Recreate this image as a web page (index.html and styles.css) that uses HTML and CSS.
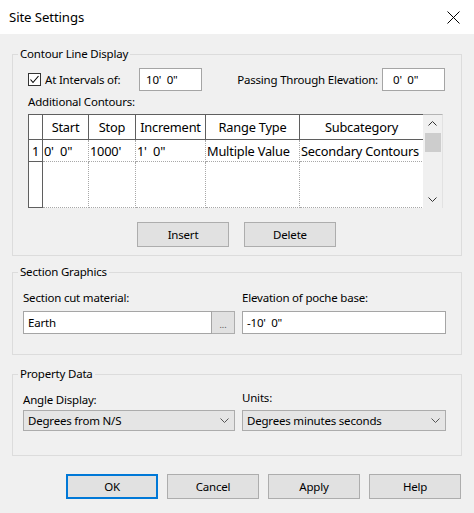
FILE: index.html
```html
<!DOCTYPE html>
<html lang="en">
<head>
<meta charset="utf-8">
<title>Site Settings</title>
<link rel="stylesheet" href="styles.css">
</head>
<body>
<div class="dialog">
  <div class="titlebar">
    <span class="title">Site Settings</span>
    <svg class="close" width="13" height="13" viewBox="0 0 13 13"><path d="M0.5 0.5L12.5 12.5M12.5 0.5L0.5 12.5" stroke="#000" stroke-width="1" fill="none"/></svg>
  </div>
  <div class="body">
    <fieldset class="group">
      <legend>Contour Line Display</legend>
      <div class="group-body contour">
        <div class="row-intervals">
          <label class="check">
            <span class="checkbox"><svg width="11" height="11" viewBox="0 0 11 11"><path d="M1.5 5.5L4 8.5L9.5 2" stroke="#000" stroke-width="1.1" fill="none"/></svg></span>
            <span>At Intervals of:</span>
          </label>
          <div class="textbox short pad6">10'  0"</div>
          <span class="spacer"></span>
          <span class="label">Passing Through Elevation:</span>
          <div class="textbox short pad10">0'  0"</div>
        </div>
        <div class="label add-label">Additional Contours:</div>
        <div class="grid-wrap">
          <div class="grid">
            <div class="hcell rowhead"></div>
            <div class="hcell">Start</div>
            <div class="hcell">Stop</div>
            <div class="hcell">Increment</div>
            <div class="hcell">Range Type</div>
            <div class="hcell">Subcategory</div>

            <div class="rcell">1</div>
            <div class="dcell">0'  0"</div>
            <div class="dcell">1000'</div>
            <div class="dcell">1'  0"</div>
            <div class="dcell">Multiple Value</div>
            <div class="dcell">Secondary Contours</div>

            <div class="rcell newrow"></div>
            <div class="dcell"></div>
            <div class="dcell"></div>
            <div class="dcell"></div>
            <div class="dcell"></div>
            <div class="dcell"></div>
          </div>
          <div class="scrollbar">
            <div class="sb-arrow"><svg width="9" height="5" viewBox="0 0 9 5"><path d="M0.5 4.5L4.5 0.5L8.5 4.5" stroke="#333" stroke-width="1" fill="none"/></svg></div>
            <div class="sb-thumb"></div>
            <div class="sb-track"></div>
            <div class="sb-arrow"><svg width="9" height="5" viewBox="0 0 9 5"><path d="M0.5 0.5L4.5 4.5L8.5 0.5" stroke="#333" stroke-width="1" fill="none"/></svg></div>
          </div>
        </div>
        <div class="btn-row center">
          <button class="btn">Insert</button>
          <button class="btn">Delete</button>
        </div>
      </div>
    </fieldset>

    <fieldset class="group section">
      <legend>Section Graphics</legend>
      <div class="group-body two-col g2">
        <div class="col">
          <div class="label">Section cut material:</div>
          <div class="picker">
            <div class="textbox grow pad4">Earth</div>
            <button class="dots">...</button>
          </div>
        </div>
        <div class="col">
          <div class="label">Elevation of poche base:</div>
          <div class="picker">
            <div class="textbox grow pad4">-10'  0"</div>
          </div>
        </div>
      </div>
    </fieldset>

    <fieldset class="group property">
      <legend>Property Data</legend>
      <div class="group-body two-col g3">
        <div class="col">
          <div class="label">Angle Display:</div>
          <div class="combo"><span>Degrees from N/S</span><svg width="9" height="5" viewBox="0 0 9 5"><path d="M0.5 0.5L4.5 4.5L8.5 0.5" stroke="#555" stroke-width="1" fill="none"/></svg></div>
        </div>
        <div class="col">
          <div class="label units">Units:</div>
          <div class="combo"><span>Degrees minutes seconds</span><svg width="9" height="5" viewBox="0 0 9 5"><path d="M0.5 0.5L4.5 4.5L8.5 0.5" stroke="#555" stroke-width="1" fill="none"/></svg></div>
        </div>
      </div>
    </fieldset>

    <div class="btn-row end">
      <button class="btn default">OK</button>
      <button class="btn">Cancel</button>
      <button class="btn">Apply</button>
      <button class="btn">Help</button>
    </div>
  </div>
</div>
</body>
</html>
```

FILE: styles.css
```css
* { box-sizing: border-box; }

body {
  margin: 0;
  background: #f0f0f0;
  font-family: "Noto Sans", "Open Sans", sans-serif;
  font-size: 11.5px;
  letter-spacing: -0.2px;
  color: #000;
}

.dialog {
  width: 474px;
  height: 513px;
  background: #f0f0f0;
}

.titlebar {
  height: 34px;
  background: #fff;
  display: flex;
  align-items: center;
  justify-content: space-between;
  padding: 0 14px 0 9px;
}

.title {
  font-size: 13.2px;
  letter-spacing: -0.1px;
  line-height: 20px;
}

.close { display: block; }

.body {
  padding: 12px 12px 0 12px;
}

.group {
  margin: 0;
  padding: 0;
  border: 1px solid #dcdcdc;
  min-width: 0;
}

.group legend {
  margin-left: 5px;
  padding: 0 2px;
  line-height: 16px;
  height: 16px;
}

.group.section { margin-top: 8px; }
.group.property { margin-top: 11px; }

.group-body.contour {
  padding: 6px 16px 8px 15px;
}

.label {
  line-height: 16px;
  white-space: nowrap;
}

.row-intervals {
  display: flex;
  align-items: center;
  height: 23px;
}

.check {
  display: flex;
  align-items: center;
  width: 111px;
}

.checkbox {
  width: 13px;
  height: 13px;
  border: 1px solid #333;
  background: #fff;
  margin-right: 4px;
  display: flex;
  align-items: center;
  justify-content: center;
}

.checkbox svg { display: block; }

.spacer { flex: 1; }

.textbox {
  height: 23px;
  border: 1px solid #a5a5a5;
  background: #fff;
  display: flex;
  align-items: center;
  white-space: pre;
}

.textbox.short { width: 63px; }
.row-intervals .label { margin-right: 4px; }

.pad4 { padding-left: 4px; }
.pad6 { padding-left: 6px; }
.pad10 { padding-left: 10px; }

.add-label { margin-top: 3px; }

.grid-wrap {
  display: flex;
  width: 415px;
  height: 94px;
  margin-top: 4px;
}

.grid {
  width: 395px;
  display: grid;
  grid-template-columns: 14px 46px 47px 70px 94px 124px;
  grid-template-rows: 25px 22px 1fr;
  background: #fff;
  border-top: 1px solid #5f5f5f;
  border-left: 1px solid #5f5f5f;
}

.hcell {
  border-right: 1px solid #5f5f5f;
  border-bottom: 1px solid #5f5f5f;
  display: flex;
  align-items: center;
  justify-content: center;
  white-space: nowrap;
  overflow: hidden;
  font-size: 12.8px;
}

.hcell.rowhead { background: #fff; }

.rcell {
  border-right: 1px solid #5f5f5f;
  border-bottom: 1px solid #5f5f5f;
  display: flex;
  align-items: center;
  justify-content: center;
  font-size: 12.8px;
}

.rcell.newrow {
  border-left: 1px solid #5f5f5f;
  margin-left: -1px;
}

.dcell {
  border-right: 1px dotted #a8a8a8;
  border-bottom: 1px dotted #a8a8a8;
  display: flex;
  align-items: center;
  padding-left: 1px;
  white-space: pre;
  overflow: hidden;
  font-size: 12.8px;
}

.scrollbar {
  width: 20px;
  display: flex;
  flex-direction: column;
  border-top: 1px solid #b4b4b4;
  border-right: 1px solid #e2e2e2;
  background: #f0f0f0;
}

.sb-arrow {
  height: 17px;
  display: flex;
  align-items: center;
  justify-content: center;
}

.sb-thumb {
  height: 19px;
  margin: 1px 1px 0 2px;
  background: #cdcdcd;
}

.sb-track { flex: 1; }

.btn-row {
  display: flex;
}

.btn-row.center {
  justify-content: center;
  gap: 15px;
  margin-top: 14px;
}

.btn-row.end {
  justify-content: flex-end;
  gap: 9px;
  margin-top: 18px;
  padding-right: 1px;
}

.btn {
  width: 92px;
  height: 25px;
  background: #e1e1e1;
  border: 1px solid #adadad;
  font-family: inherit;
  font-size: 11.5px;
  letter-spacing: -0.2px;
  color: #000;
  padding: 0;
}

.btn.default {
  border: 2px solid #0078d7;
}

.two-col {
  display: grid;
  grid-template-columns: 212px 1fr;
  column-gap: 7px;
  padding: 10px 15px 20px 10px;
}

.two-col.g3 { padding-bottom: 24px; }

.picker {
  display: flex;
  margin-top: 5px;
}

.grow { flex: 1; }

.dots {
  width: 23px;
  height: 23px;
  background: #e1e1e1;
  border: 1px solid #adadad;
  border-left: none;
  font-family: inherit;
  font-size: 9px;
  color: #555;
  padding: 4px 0 0 0;
}

.combo {
  margin-top: 2px;
  height: 21px;
  background: #e5e5e5;
  border: 1px solid #acacac;
  display: flex;
  align-items: center;
  justify-content: space-between;
  padding: 0 5px 0 4px;
}

.combo svg { display: block; }

.label.units { position: relative; top: -2px; }
```
